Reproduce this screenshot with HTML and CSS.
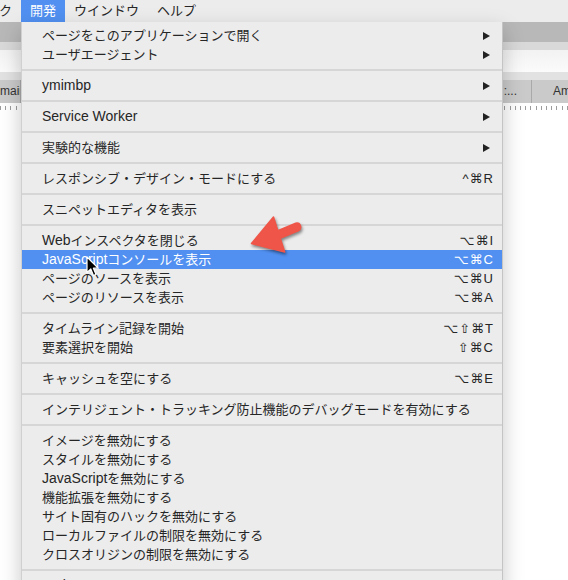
FILE: index.html
```html
<!DOCTYPE html>
<html lang="ja">

<head>
    <meta charset="UTF-8">
    <meta name="viewport" content="width=device-width, initial-scale=1.0">
    <title>開発メニュー</title>
    <link rel="stylesheet" href="styles.css">
</head>

<body>
    <!-- Menu bar -->
    <div class="menubar">
        <span class="mb-item mb-first">ク</span>
        <span class="mb-item active">開発</span>
        <span class="mb-item">ウインドウ</span>
        <span class="mb-item">ヘルプ</span>
    </div>

    <!-- Browser window behind the menu -->
    <div class="toolbar-tabs"></div>
    <div class="toolbar-edge"></div>
    <div class="toolbar-field"></div>
    <div class="toolbar-edge2"></div>
    <div class="table-head">
        <div class="cell cell-left">main</div>
        <div class="cell cell-mid">:...</div>
        <div class="cell cell-right">Amount</div>
    </div>
    <div class="ruler"></div>

    <!-- Develop menu -->
    <ul class="menu">
        <li class="item"><span>ページをこのアプリケーションで開く</span><span class="sub"></span></li>
        <li class="item"><span>ユーザエージェント</span><span class="sub"></span></li>
        <li class="sep"></li>
        <li class="item"><span class="latin">ymimbp</span><span class="sub"></span></li>
        <li class="sep"></li>
        <li class="item"><span class="latin">Service Worker</span><span class="sub"></span></li>
        <li class="sep"></li>
        <li class="item"><span>実験的な機能</span><span class="sub"></span></li>
        <li class="sep"></li>
        <li class="item"><span>レスポンシブ・デザイン・モードにする</span><span class="key">^⌘R</span></li>
        <li class="sep"></li>
        <li class="item"><span>スニペットエディタを表示</span></li>
        <li class="sep"></li>
        <li class="item"><span><span class="latin">Web</span>インスペクタを閉じる</span><span class="key">⌥⌘I</span></li>
        <li class="item hl"><span><span class="latin">JavaScript</span>コンソールを表示</span><span class="key">⌥⌘C</span></li>
        <li class="item"><span>ページのソースを表示</span><span class="key">⌥⌘U</span></li>
        <li class="item"><span>ページのリソースを表示</span><span class="key">⌥⌘A</span></li>
        <li class="sep"></li>
        <li class="item"><span>タイムライン記録を開始</span><span class="key">⌥⇧⌘T</span></li>
        <li class="item"><span>要素選択を開始</span><span class="key">⇧⌘C</span></li>
        <li class="sep"></li>
        <li class="item"><span>キャッシュを空にする</span><span class="key">⌥⌘E</span></li>
        <li class="sep"></li>
        <li class="item"><span>インテリジェント・トラッキング防止機能のデバッグモードを有効にする</span></li>
        <li class="sep"></li>
        <li class="item"><span>イメージを無効にする</span></li>
        <li class="item"><span>スタイルを無効にする</span></li>
        <li class="item"><span><span class="latin">JavaScript</span>を無効にする</span></li>
        <li class="item"><span>機能拡張を無効にする</span></li>
        <li class="item"><span>サイト固有のハックを無効にする</span></li>
        <li class="item"><span>ローカルファイルの制限を無効にする</span></li>
        <li class="item"><span>クロスオリジンの制限を無効にする</span></li>
        <li class="sep"></li>
        <li class="item"><span class="latin">WebRTC</span><span class="sub"></span></li>
    </ul>

    <!-- Red annotation arrow -->
    <svg class="arrow" width="70" height="60" viewBox="240 205 70 60">
        <path d="M251.5 243.5 L273.5 217 L277.8 230.7 L295.8 223.2 A4 4 0 0 1 298.2 230.8 L280.2 238.3 L284.7 251.9 Z"
            fill="#ef5548" stroke="#ef5548" stroke-width="1.5" stroke-linejoin="round" />
    </svg>

    <!-- Mouse pointer -->
    <svg class="cursor" width="14" height="22" viewBox="0 0 14 22">
        <path d="M1 1 L1 16.5 L4.8 13 L7.5 19.5 L10 18.4 L7.4 12.2 L12.3 12.2 Z"
            fill="#000" stroke="#fff" stroke-width="1.2" stroke-linejoin="round" />
    </svg>
</body>

</html>
```

FILE: styles.css
```css
/* Page frame */
body {
    margin: 0;
    width: 568px;
    height: 580px;
    overflow: hidden;
    position: relative;
    background-color: #fff;
    font-family: "Liberation Sans", "Noto Sans CJK JP", sans-serif;
    color: #262626;
}

/* Top menu bar */
.menubar {
    display: flex;
    height: 22px;
    line-height: 22px;
    font-size: 13px;
    background-color: #ececec;
}

.mb-item {
    padding: 0 9px;
    white-space: nowrap;
}

.mb-first {
    margin-left: -1px;
    padding-left: 0;
}

.mb-item.active {
    background-color: #5190f1;
    color: #fff;
}

/* Window chrome behind the menu */
.toolbar-tabs {
    height: 20px;
    background-color: #b8b8b8;
}

.toolbar-edge {
    height: 8px;
    background-color: #d9d9d9;
}

.toolbar-field {
    height: 22px;
    background: linear-gradient(#f2f2f2, #fbfbfb);
}

.toolbar-edge2 {
    height: 8px;
    background-color: #e2e2e2;
}

.table-head {
    display: flex;
    height: 23px;
    line-height: 23px;
    font-size: 12px;
    color: #333;
    background-color: #cacaca;
}

.cell {
    white-space: nowrap;
    overflow: hidden;
}

.cell-left {
    width: 20px;
    border-right: 1px solid #a9a9a9;
}

.cell-mid {
    flex: 1;
    text-align: right;
    padding-right: 14px;
    border-right: 1px solid #a9a9a9;
}

.cell-right {
    width: 15px;
    padding-left: 21px;
}

.ruler {
    height: 4px;
    margin-top: 3px;
    background: repeating-linear-gradient(to right, #9c9c9c 0 1px, transparent 1px 5.2px);
}

/* Dropdown menu */
.menu {
    position: absolute;
    left: 21px;
    top: 22px;
    width: 480px;
    margin: 0;
    padding: 4px 0;
    list-style: none;
    background-color: #ececec;
    border-left: 1px solid #d0d0d0;
    border-right: 1px solid #c4c4c4;
    box-shadow: 0 8px 20px rgba(0, 0, 0, 0.22);
    font-size: 13px;
}

.item {
    display: flex;
    align-items: center;
    justify-content: space-between;
    height: 19px;
    line-height: 19px;
    padding: 0 9px 0 20px;
    white-space: nowrap;
}

.item.hl {
    background-color: #5190f1;
    color: #fff;
}

.sep {
    height: 2px;
    margin: 5px 0;
    background-color: #d6d6d6;
}

.latin {
    font-size: 14px;
}

.key {
    font-family: "Liberation Sans", "DejaVu Sans", sans-serif;
    font-size: 13px;
    letter-spacing: 1px;
    margin-right: -1px;
}

.sub {
    width: 0;
    height: 0;
    margin-right: 3px;
    border-left: 7px solid #222;
    border-top: 4.5px solid transparent;
    border-bottom: 4.5px solid transparent;
}

/* Overlays */
.arrow {
    position: absolute;
    left: 240px;
    top: 205px;
    filter: drop-shadow(1px 2px 1.5px rgba(0, 0, 0, 0.45));
}

.cursor {
    position: absolute;
    left: 86px;
    top: 256px;
}
```
